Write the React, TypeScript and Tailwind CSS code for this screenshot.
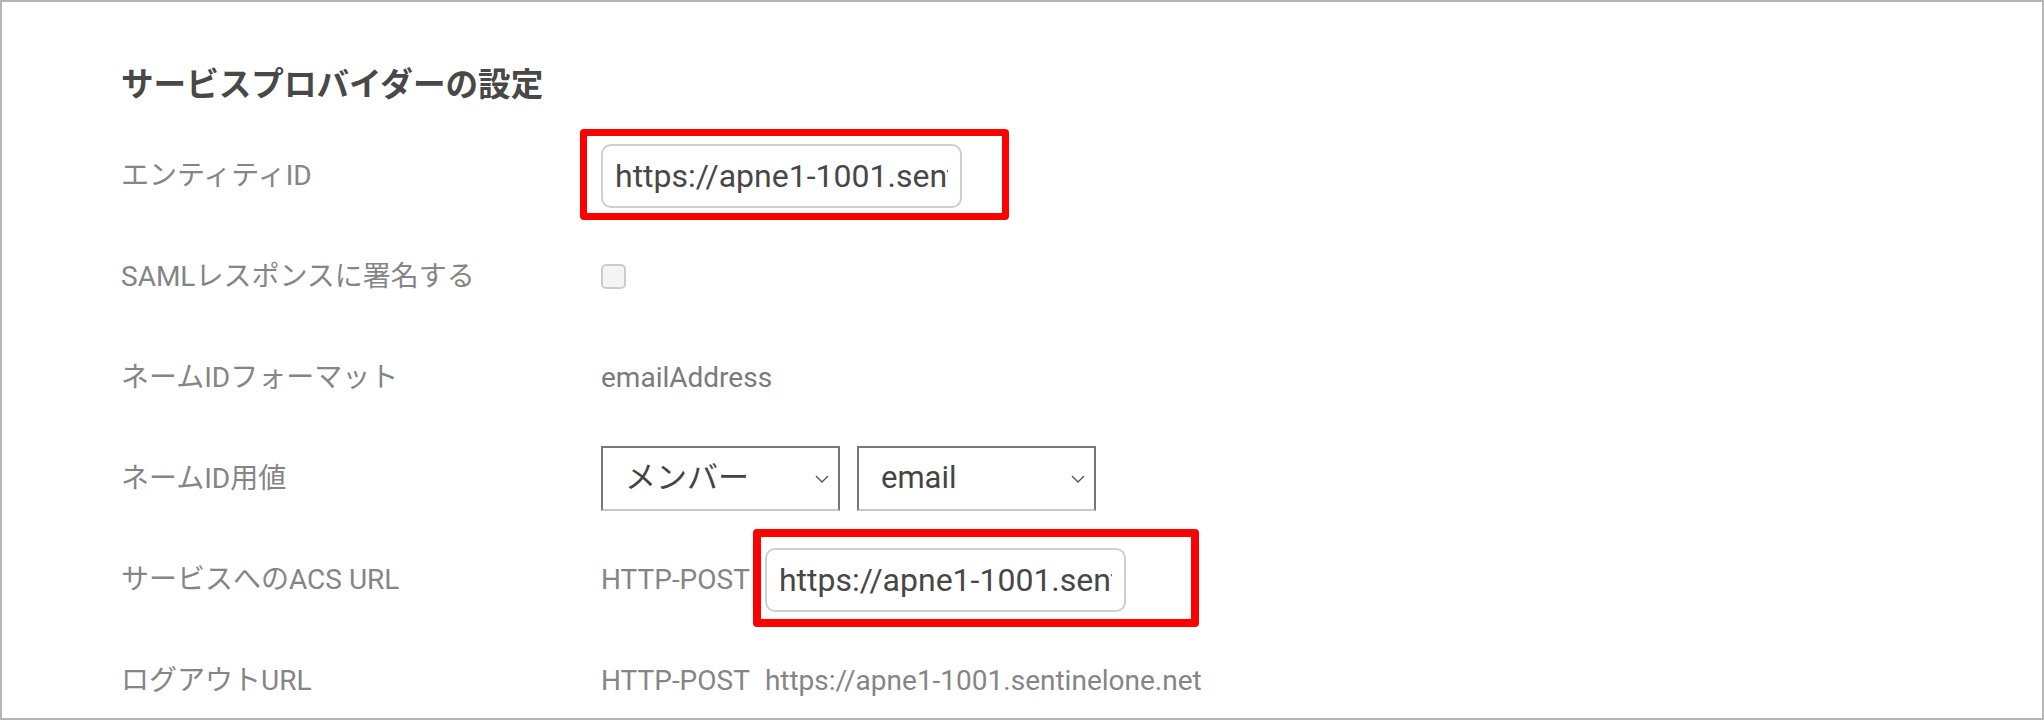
import React from "react";

const FONT = { fontFamily: 'Roboto, "Noto Sans CJK JP", sans-serif' };

function Chevron() {
  return (
    <svg width="14" height="8" viewBox="0 0 14 8" fill="none" stroke="#555" strokeWidth="1.4">
      <path d="M1 1l6 6 6-6" />
    </svg>
  );
}

function SelectBox({ label }: { label: string }) {
  return (
    <div className="flex h-[65px] w-[239px] items-center justify-between border-2 border-[#777] border-b-[#c8c8c8] pl-[22px] pr-[9px] text-[31px] text-[#444]">
      <span>{label}</span>
      <Chevron />
    </div>
  );
}

function TextBox({ value }: { value: string }) {
  return (
    <input
      readOnly
      value={value}
      className="h-[64px] w-[361px] rounded-[10px] border-2 border-[#cfcfcf] bg-white px-[12px] text-[32px] text-[#474747] outline-none"
      style={FONT}
    />
  );
}

function Row({ label, children }: { label: string; children: React.ReactNode }) {
  return (
    <div className="flex h-[101px] items-center">
      <div className="w-[480px] shrink-0 text-[28px] text-[#858585]">{label}</div>
      <div className="flex items-center">{children}</div>
    </div>
  );
}

export default function App() {
  const url = "https://apne1-1001.sentinelone.net";

  return (
    <div className="h-[720px] w-full border-2 border-[#b5b5b5] bg-white pl-[119px] pt-[61px]" style={FONT}>
      <h2 className="text-[32.6px] font-bold leading-[44px] text-[#484848]">サービスプロバイダーの設定</h2>

      <div className="mt-[18px] flex flex-col">
        <Row label="エンティティID">
          <div className="relative">
            <TextBox value={url} />
            {/* red annotation */}
            <div className="pointer-events-none absolute -left-[21px] -top-[15px] h-[91px] w-[429px] rounded-[4px] border-[7px] border-[#ff0000]" />
          </div>
        </Row>

        <Row label="SAMLレスポンスに署名する">
          <div className="h-[25px] w-[25px] rounded-[5px] border-2 border-[#cccccc] bg-[#f4f4f4]" />
        </Row>

        <Row label="ネームIDフォーマット">
          <span className="text-[28px] text-[#7a7a7a]">emailAddress</span>
        </Row>

        <Row label="ネームID用値">
          <div className="flex gap-[17px]">
            <SelectBox label="メンバー" />
            <SelectBox label="email" />
          </div>
        </Row>

        <Row label="サービスへのACS URL">
          <span className="text-[28px] text-[#858585]">HTTP-POST</span>
          <div className="relative ml-[15px]">
            <TextBox value={url} />
            <div className="pointer-events-none absolute -left-[12px] -top-[19px] h-[98px] w-[446px] rounded-[4px] border-[8px] border-[#ff0000]" />
          </div>
        </Row>

        <Row label="ログアウトURL">
          <span className="text-[28px] text-[#858585]">HTTP-POST</span>
          <span className="ml-[15px] text-[28px] text-[#858585]">{url}</span>
        </Row>
      </div>
    </div>
  );
}
